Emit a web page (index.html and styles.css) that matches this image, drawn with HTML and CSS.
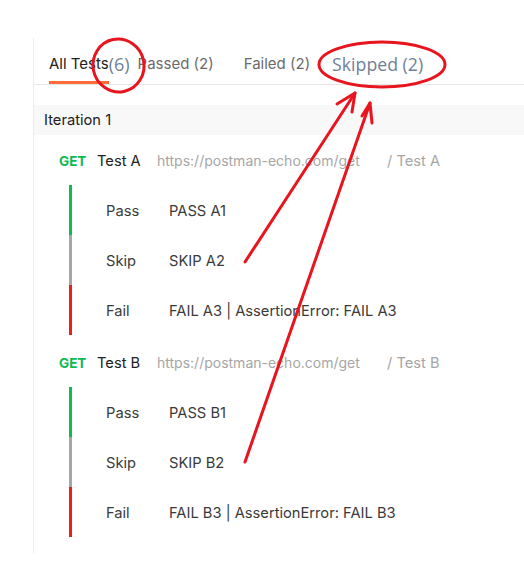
FILE: index.html
```html
<!DOCTYPE html>
<html lang="en">
<head>
    <meta charset="UTF-8">
    <title>Test Results</title>
    <link rel="stylesheet" href="styles.css">
</head>
<body>
    <div class="panel">
        <div class="tabs">
            <div class="tab tab-all active"><span class="tab-label">All Tests</span><span class="count-edit">(6)</span></div>
            <div class="tab tab-passed">Passed (2)</div>
            <div class="tab tab-failed">Failed (2)</div>
            <div class="tab tab-skipped">Skipped (2)</div>
        </div>

        <div class="iteration">Iteration 1</div>

        <div class="request">
            <div class="request-head">
                <span class="method">GET</span>
                <span class="request-name">Test A</span>
                <span class="request-url">https://postman-echo.com/get</span>
                <span class="request-path">/ Test A</span>
            </div>
            <div class="result pass"><span class="status">Pass</span><span class="message">PASS A1</span></div>
            <div class="result skip"><span class="status">Skip</span><span class="message">SKIP A2</span></div>
            <div class="result fail"><span class="status">Fail</span><span class="message">FAIL A3 | AssertionError: FAIL A3</span></div>
        </div>

        <div class="request">
            <div class="request-head">
                <span class="method">GET</span>
                <span class="request-name">Test B</span>
                <span class="request-url">https://postman-echo.com/get</span>
                <span class="request-path">/ Test B</span>
            </div>
            <div class="result pass"><span class="status">Pass</span><span class="message">PASS B1</span></div>
            <div class="result skip"><span class="status">Skip</span><span class="message">SKIP B2</span></div>
            <div class="result fail"><span class="status">Fail</span><span class="message">FAIL B3 | AssertionError: FAIL B3</span></div>
        </div>
    </div>

    <!-- hand-drawn annotations on top of the screenshot -->
    <svg class="marks" width="524" height="569" viewBox="0 0 524 569">
        <g fill="none" stroke="#e8141e" stroke-width="3" stroke-linecap="round" stroke-linejoin="round">
            <ellipse cx="118.5" cy="65.5" rx="25.5" ry="26.5" transform="rotate(-12 118.5 65.5)"/>
            <ellipse cx="382" cy="64.5" rx="63" ry="22.5"/>
            <path d="M245 262 L355 93"/>
            <path d="M337 104 L355 93 L352 112"/>
            <path d="M245 462 L370 103"/>
            <path d="M362 116 L370 103 L372 123"/>
        </g>
    </svg>
</body>
</html>
```

FILE: styles.css
```css
:root {
    --text: #212121;
    --text-muted: #6b6b6b;
    --text-light: #a6a6a6;
    --border: #ededed;
    --accent: #ff6c37;
    --green: #0cbb52;
    --grey: #a6a6a6;
    --red: #eb2013;
    --edit: #6f7f98;
}

* {
    margin: 0;
    padding: 0;
    box-sizing: border-box;
}

body {
    width: 524px;
    height: 569px;
    background: #fff;
    color: var(--text);
    font-family: Inter, 'Noto Sans', sans-serif;
    font-size: 14.7px;
    position: relative;
    overflow: hidden;
}

.panel {
    margin: 38px 0 0 33px;
    height: 515px;
    border-left: 1px solid var(--border);
}

.tabs {
    display: flex;
    align-items: stretch;
    height: 47px;
    padding-left: 15px;
    border-bottom: 1px solid #e6e6e6;
}

.tab {
    display: flex;
    align-items: center;
    padding-top: 8px;
    font-size: 15px;
    color: var(--text-muted);
    white-space: nowrap;
}

.tab-label {
    display: flex;
    align-items: center;
    align-self: stretch;
    border-bottom: 3px solid transparent;
}

.tab.active {
    color: var(--text);
}

.tab.active .tab-label {
    border-bottom-color: var(--accent);
}

.tab-passed,
.tab-failed,
.tab-skipped {
    border-bottom: 3px solid transparent;
}

.count-edit {
    font-family: 'Open Sans', 'Noto Sans', sans-serif;
    font-size: 18px;
    color: var(--edit);
    margin-bottom: 3px;
}

.tab-passed { margin-left: 8px; }
.tab-failed { margin-left: 30px; }

.tab-skipped {
    margin-left: 22px;
    font-family: 'Open Sans', 'Noto Sans', sans-serif;
    font-size: 17.7px;
    color: var(--edit);
}

.iteration {
    margin-top: 20px;
    height: 30px;
    line-height: 31px;
    padding-left: 10px;
    background: #f8f8f8;
}

.request {
    padding-bottom: 2px;
}

.request-head {
    display: flex;
    align-items: center;
    height: 50px;
    padding-top: 1px;
    padding-left: 25px;
    white-space: nowrap;
}

.method {
    color: var(--green);
    font-weight: 700;
    font-size: 13.5px;
    width: 38px;
}

.request-name {
    width: 60px;
}

.request-url {
    color: var(--text-light);
    font-size: 14px;
    width: 230px;
}

.request-path {
    color: var(--text-light);
}

.result {
    display: flex;
    align-items: center;
    height: 50px;
    margin-left: 35px;
    padding-top: 2px;
    padding-left: 34px;
    border-left: 3px solid var(--grey);
    color: #3a3a3a;
}

.result.pass { border-left-color: var(--green); }
.result.skip { border-left-color: var(--grey); }
.result.fail { border-left-color: var(--red); }

.status {
    width: 63px;
}

.marks {
    position: absolute;
    left: 0;
    top: 0;
    pointer-events: none;
}
```
